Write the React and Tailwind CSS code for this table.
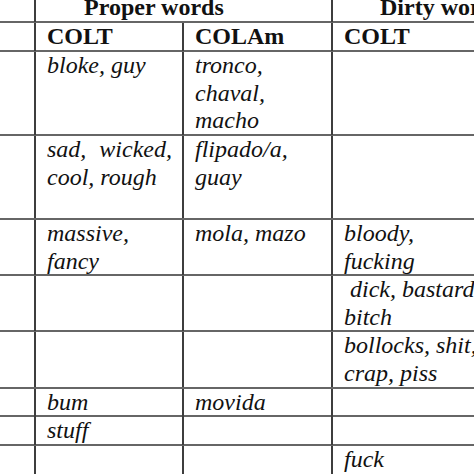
import React from "react";

const V = "border-l-2 border-[#3d3d3d]";
const COLS = "grid grid-cols-[34px_148px_149px_220px]";

function Cell({ lines = [], className = "" }) {
  return (
    <div className={`${V} pl-[11px] pr-[10px] ${className}`}>
      {lines.map((l, i) => {
        const obj = typeof l === "object";
        const text = obj ? l.t : l;
        return (
          <div
            key={i}
            className={`whitespace-nowrap ${obj && l.j ? "[text-align-last:justify] whitespace-normal" : ""} ${obj && l.pl ? "pl-[6px]" : ""}`}
          >
            {text}
          </div>
        );
      })}
    </div>
  );
}

function Row({ h, last = false, children }) {
  return (
    <div className={`${COLS} ${h} ${last ? "" : "border-b-2 border-[#666]"}`}>
      {children}
    </div>
  );
}

export default function App() {
  return (
    <div
      className="w-[474px] h-[474px] overflow-hidden bg-white text-[#111] italic text-[24px] leading-[27.5px]"
      style={{ fontFamily: '"Liberation Serif", "Times New Roman", serif' }}
    >
      <div className="w-[560px]">
        <Row h="h-[23px]">
          <div />
          <div className={`${V} col-span-2 not-italic font-bold text-[24px] pl-[48px]`}>
            <div className="-mt-[6px] whitespace-nowrap">Proper words</div>
          </div>
          <div className={`${V} not-italic font-bold text-[24px] pl-[47px]`}>
            <div className="-mt-[6px] whitespace-nowrap">Dirty words</div>
          </div>
        </Row>
        <Row h="h-[29px]">
          <div />
          <Cell className="not-italic font-bold" lines={["COLT"]} />
          <Cell className="not-italic font-bold" lines={["COLAm"]} />
          <Cell className="not-italic font-bold" lines={["COLT"]} />
        </Row>
        <Row h="h-[84px]">
          <div />
          <Cell lines={["bloke, guy"]} />
          <Cell lines={["tronco,", "chaval,", "macho"]} />
          <Cell />
        </Row>
        <Row h="h-[84px]">
          <div />
          <Cell lines={[{ t: "sad, wicked,", j: true }, "cool, rough"]} />
          <Cell lines={["flipado/a,", "guay"]} />
          <Cell />
        </Row>
        <Row h="h-[56px]">
          <div />
          <Cell lines={["massive,", "fancy"]} />
          <Cell lines={["mola, mazo"]} />
          <Cell lines={["bloody,", "fucking"]} />
        </Row>
        <Row h="h-[56px]">
          <div />
          <Cell />
          <Cell />
          <Cell lines={[{ t: "dick, bastard,", pl: true }, "bitch"]} />
        </Row>
        <Row h="h-[57px]">
          <div />
          <Cell />
          <Cell />
          <Cell lines={["bollocks,  shit,", "crap, piss"]} />
        </Row>
        <Row h="h-[28px]">
          <div />
          <Cell lines={["bum"]} />
          <Cell lines={["movida"]} />
          <Cell />
        </Row>
        <Row h="h-[29px]">
          <div />
          <Cell lines={["stuff"]} />
          <Cell />
          <Cell />
        </Row>
        <Row h="h-[40px]" last>
          <div />
          <Cell />
          <Cell />
          <Cell lines={["fuck"]} />
        </Row>
      </div>
    </div>
  );
}
